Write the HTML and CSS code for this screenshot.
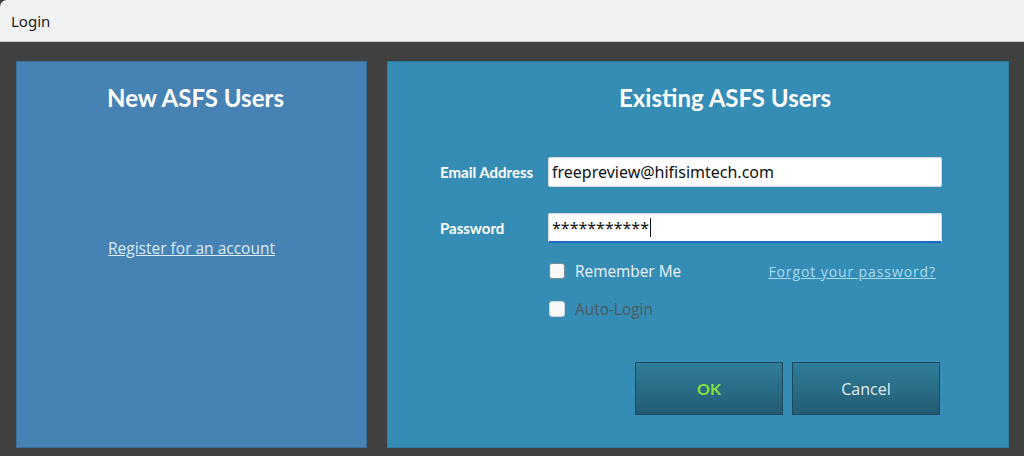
FILE: index.html
```html
<!DOCTYPE html>
<html>
<head>
<meta charset="utf-8">
<link rel="stylesheet" href="styles.css">
</head>
<body>
<div class="window">
  <div class="titlebar"><span class="title">Login</span></div>
  <div class="client">
    <section class="panel panel-new">
      <h2 class="panel-title title-new">New ASFS Users</h2>
      <a class="register" href="#">Register for an account</a>
    </section>
    <section class="panel panel-existing">
      <h2 class="panel-title title-existing">Existing ASFS Users</h2>
      <div class="form">
        <div class="form-row">
          <label class="lbl">Email Address</label>
          <div class="field">freepreview@hifisimtech.com</div>
        </div>
        <div class="form-row row-pass">
          <label class="lbl">Password</label>
          <div class="field field-focus">***********<span class="caret"></span></div>
        </div>
        <div class="check-row row-remember">
          <span class="box"></span><span class="check-lbl">Remember Me</span>
          <a class="forgot" href="#">Forgot your password?</a>
        </div>
        <div class="check-row row-auto">
          <span class="box"></span><span class="check-lbl disabled">Auto-Login</span>
        </div>
      </div>
      <div class="buttons">
        <button class="btn btn-ok">OK</button>
        <button class="btn">Cancel</button>
      </div>
    </section>
  </div>
</div>
</body>
</html>
```

FILE: styles.css
```css
html, body {
  margin: 0;
  padding: 0;
  background: #404040;
}
.window {
  width: 1024px;
  height: 456px;
  display: flex;
  flex-direction: column;
  overflow: hidden;
}
.titlebar {
  flex: none;
  height: 42px;
  box-sizing: border-box;
  background: #f0f3f2;
  border-bottom: 1px solid #c9cccb;
  border-top-left-radius: 7px;
  display: flex;
  align-items: center;
  padding-left: 11px;
}
.title {
  font-family: "Noto Sans", "Open Sans", sans-serif;
  font-size: 15px;
  color: #1c1c1c;
}
.client {
  flex: 1;
  display: flex;
  gap: 20px;
  padding: 19px 15px 8px 16px;
  background: #404040;
}
.panel {
  box-sizing: border-box;
  border: 1px solid #3a6f9a;
  display: flex;
  flex-direction: column;
}
.panel-new {
  width: 351px;
  background: #4682b4;
  align-items: center;
}
.panel-existing {
  flex: 1;
  background: #358db5;
  border-color: #2f7ea2;
  padding-left: 52px;
}
.panel-title {
  margin: 20px 0 0;
  font-family: Lato, "Open Sans", sans-serif;
  font-weight: 700;
  font-size: 24px;
  line-height: 32px;
  color: #ffffff;
  text-align: center;
}
.title-new {
  padding-left: 8px;
}
.title-existing {
  width: 502px;
  box-sizing: border-box;
  padding-left: 68px;
}
.register {
  margin-top: 123px;
  font-family: "Open Sans", "Noto Sans", sans-serif;
  font-size: 15.5px;
  color: #dcecf7;
  text-decoration: underline;
}
.form {
  margin-top: 43px;
  width: 502px;
  display: flex;
  flex-direction: column;
}
.form-row {
  display: flex;
  align-items: center;
  height: 30px;
}
.row-pass {
  margin-top: 26px;
}
.lbl {
  width: 108px;
  flex: none;
  font-family: Lato, "Open Sans", sans-serif;
  font-weight: 700;
  font-size: 15px;
  color: #ffffff;
}
.field {
  flex: 1;
  height: 30px;
  box-sizing: border-box;
  background: #ffffff;
  border: 1px solid #d8d8d8;
  border-radius: 2px;
  font-family: "Noto Sans", "Open Sans", sans-serif;
  font-size: 16px;
  color: #111;
  padding-left: 3px;
  display: flex;
  align-items: center;
}
.field-focus {
  border-bottom: 2px solid #1a68c8;
}
.caret {
  display: inline-block;
  width: 1px;
  height: 19px;
  background: #111;
  margin-left: 1px;
}
.check-row {
  display: flex;
  align-items: center;
  height: 16px;
  padding-left: 109px;
}
.row-remember {
  margin-top: 20px;
}
.row-auto {
  margin-top: 22px;
}
.box {
  width: 14px;
  height: 14px;
  background: #f8f8f8;
  border: 1px solid #7a8a92;
  border-radius: 3px;
  flex: none;
}
.row-auto .box {
  border-color: #c8d4da;
}
.check-lbl {
  margin-left: 10px;
  font-family: "Open Sans", "Noto Sans", sans-serif;
  font-size: 15.4px;
  color: #eef3f5;
}
.check-lbl.disabled {
  color: #4e5a60;
}
.forgot {
  margin-left: auto;
  margin-right: 6px;
  font-family: "Open Sans", "Noto Sans", sans-serif;
  font-size: 14px;
  letter-spacing: 0.9px;
  color: #a9dcf5;
  text-decoration: underline;
}
.buttons {
  margin-top: 45px;
  width: 502px;
  box-sizing: border-box;
  padding-right: 2px;
  display: flex;
  justify-content: flex-end;
  gap: 9px;
}
.btn {
  width: 148px;
  height: 53px;
  box-sizing: border-box;
  border: 1px solid #1d4a60;
  background: linear-gradient(#2f7d98, #235c74);
  font-family: "Open Sans", "Noto Sans", sans-serif;
  font-size: 16px;
  color: #e4edf1;
  padding: 0;
}
.btn-ok {
  color: #84e23a;
  font-weight: 700;
  font-family: Lato, "Open Sans", sans-serif;
}
```
